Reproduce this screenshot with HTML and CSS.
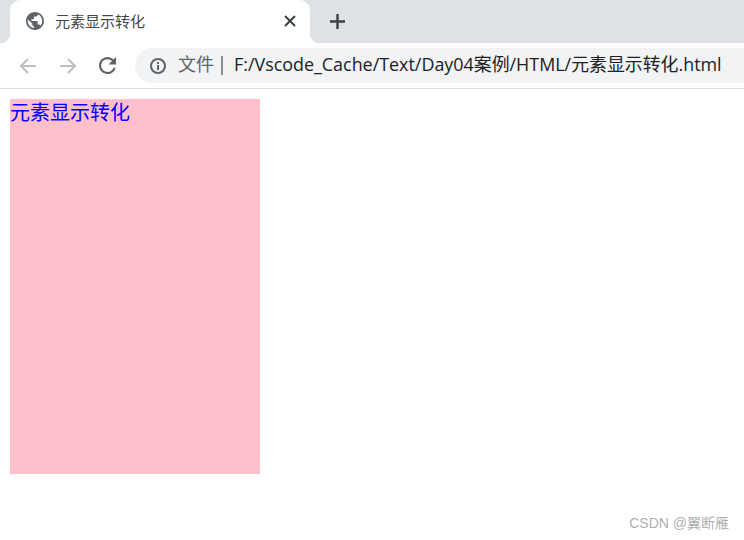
FILE: index.html
```html
<!DOCTYPE html>
<html lang="zh">
<head>
<meta charset="utf-8">
<title>元素显示转化</title>
<link rel="stylesheet" href="styles.css">
</head>
<body>
<header class="chrome">
  <div class="tabstrip">
    <div class="tab">
      <svg class="globe" viewBox="2 2 20 20" width="18" height="18"><path fill="#5f6368" d="M12 2C6.48 2 2 6.480 2 12s4.480 10 10 10 10-4.480 10-10S17.520 2 12 2zm-1 17.930c-3.950-.49-7-3.850-7-7.930 0-.62.08-1.210.21-1.790L9 15v1c0 1.100.9 2 2 2v1.930zm6.900-2.540c-.26-.81-1-1.390-1.900-1.390h-1v-3c0-.55-.45-1-1-1H8v-2h2c.55 0 1-.45 1-1V7h2c1.100 0 2-.9 2-2v-.41c2.930 1.190 5 4.060 5 7.410 0 2.080-.8 3.970-2.100 5.390z"/></svg>
      <span class="tab-title">元素显示转化</span>
      <svg class="close" viewBox="0 0 12 12" width="12" height="12"><path d="M1 1l10 10M11 1L1 11" stroke="#3c4043" stroke-width="2" fill="none"/></svg>
    </div>
    <svg class="plus" viewBox="0 0 15 15" width="15" height="15"><path d="M7.500 0v15M0 7.500h15" stroke="#3c4043" stroke-width="2.400" fill="none"/></svg>
  </div>
  <div class="toolbar">
    <svg class="nav back" viewBox="0 0 18 18" width="18" height="18"><path d="M17 9H2M9 2L2 9l7 7" stroke="#bcbfc2" stroke-width="2" fill="none"/></svg>
    <svg class="nav forward" viewBox="0 0 18 18" width="18" height="18"><path d="M1 9h15M9 2l7 7-7 7" stroke="#bcbfc2" stroke-width="2" fill="none"/></svg>
    <svg class="nav reload" viewBox="4 4 16 16" width="17" height="17"><path fill="#5f6368" d="M17.650 6.350C16.200 4.900 14.210 4 12 4c-4.420 0-7.990 3.580-7.990 8s3.570 8 7.990 8c3.730 0 6.840-2.550 7.730-6h-2.080c-.82 2.330-3.040 4-5.650 4-3.310 0-6-2.690-6-6s2.690-6 6-6c1.660 0 3.140.69 4.220 1.780L13 11h7V4l-2.350 2.350z"/></svg>
    <div class="omnibox">
      <svg class="info" viewBox="0 0 16 16" width="16" height="16"><circle cx="8" cy="8" r="7" stroke="#5f6368" stroke-width="2" fill="none"/><path d="M8 7v5M8 4v2" stroke="#5f6368" stroke-width="2" fill="none"/></svg>
      <span class="scheme">文件</span>
      <span class="divider"></span>
      <span class="url">F:/Vscode_Cache/Text/Day04案例/HTML/元素显示转化.html</span>
    </div>
  </div>
</header>
<main class="page">
  <div class="box">元素显示转化</div>
</main>
<div class="watermark">CSDN @翼断雁</div>
</body>
</html>
```
FILE: styles.css
```css
* { box-sizing: border-box; }
html, body { margin: 0; padding: 0; }
body {
  width: 744px;
  height: 540px;
  overflow: hidden;
  background: #fff;
  font-family: "Liberation Sans", "Noto Sans CJK SC", sans-serif;
}
.chrome { border-bottom: 1px solid #dadce0; height: 89px; }
.tabstrip {
  height: 43px;
  background: #dee1e6;
  display: flex;
  align-items: center;
  padding-left: 10px;
}
.tab {
  position: relative;
  width: 300px;
  height: 43px;
  background: #fff;
  border-radius: 10px 10px 0 0;
  display: flex;
  align-items: center;
  padding-left: 16px;
}
.tab::before, .tab::after {
  content: "";
  position: absolute;
  bottom: 0;
  width: 10px;
  height: 10px;
}
.tab::before { left: -10px; background: radial-gradient(circle at 0 0, transparent 10px, #fff 10.500px); }
.tab::after { right: -10px; background: radial-gradient(circle at 100% 0, transparent 10px, #fff 10.500px); }
.globe { margin-top: -1px; flex: none; }
.tab-title {
  margin-left: 11px;
  margin-top: 1px;
  font-size: 15px;
  line-height: 20px;
  color: #45474a;
  flex: 1;
}
.close { margin-right: 14px; margin-top: -1px; }
.plus { margin-left: 20px; margin-top: -1px; }
.toolbar {
  height: 45px;
  display: flex;
  align-items: center;
  background: #fff;
}
.nav { flex: none; }
.back { margin-left: 19px; }
.forward { margin-left: 22px; }
.reload { margin-left: 22px; margin-right: 1px; }
.omnibox {
  margin-left: 18px;
  flex: 1;
  height: 35px;
  background: #f1f3f4;
  border-radius: 17.500px 0 0 17.500px;
  display: flex;
  align-items: center;
  padding-left: 15px;
}
.info { flex: none; }
.scheme { margin-left: 12px; margin-bottom: 1px; font-size: 18px; line-height: 24px; color: #5f6368; }
.divider { width: 2px; height: 19px; background: #8a8d90; margin-left: 7px; }
.url {
  margin-left: 11px;
  margin-bottom: 3px;
  font-family: "Open Sans", "Noto Sans CJK SC", sans-serif;
  font-size: 17.900px;
  line-height: 24px;
  color: #202124;
  white-space: nowrap;
}
.page { padding: 10px; }
.box {
  width: 250px;
  height: 375px;
  background: pink;
  color: blue;
  font-size: 20px;
  line-height: 29px;
}
.watermark {
  position: absolute;
  right: 15px;
  top: 512px;
  font-size: 14px;
  color: #b0b0b0;
  white-space: nowrap;
}
```
